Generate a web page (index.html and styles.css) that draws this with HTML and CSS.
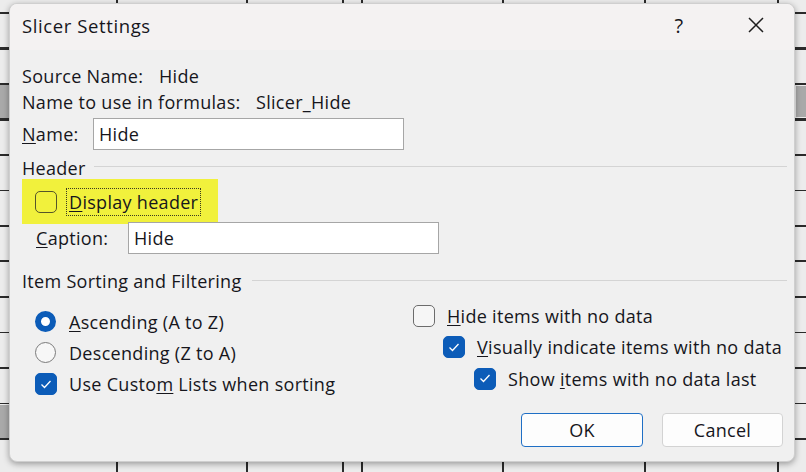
FILE: index.html
```html
<!DOCTYPE html>
<html>
<head>
<meta charset="utf-8">
<link rel="stylesheet" href="styles.css">
</head>
<body>
<div class="sheet">
  <div class="dialog">
    <div class="titlebar">
      <div class="title">Slicer Settings</div>
      <div class="tb-help">?</div>
      <div class="tb-close">
        <svg width="16" height="16" viewBox="0 0 16 16"><path d="M1 1 L15 15 M15 1 L1 15" stroke="#1f1f1f" stroke-width="1.5" fill="none"/></svg>
      </div>
    </div>
    <div class="body">
      <div class="row info">
        <span class="lbl w-src">Source Name:</span><span>Hide</span>
      </div>
      <div class="row info">
        <span class="lbl w-form">Name to use in formulas:</span><span>Slicer_Hide</span>
      </div>
      <div class="row field name-row">
        <span class="lbl w-name"><u>N</u>ame:</span>
        <div class="input">Hide</div>
      </div>
      <div class="group head-header">
        <span>Header</span><span class="sep"></span>
      </div>
      <div class="highlight">
        <span class="cb cb-hl"></span>
        <span class="focus"><u>D</u>isplay header</span>
      </div>
      <div class="row field caption-row">
        <span class="lbl w-cap"><u>C</u>aption:</span>
        <div class="input">Hide</div>
      </div>
      <div class="group head-sort">
        <span>Item Sorting and Filtering</span><span class="sep sep2"></span>
      </div>
      <div class="options">
        <div class="col left">
          <div class="opt"><span class="radio on"></span><span><u>A</u>scending (A to Z)</span></div>
          <div class="opt"><span class="radio"></span><span>Descendin<u>g</u> (Z to A)</span></div>
          <div class="opt"><span class="cb on"><svg width="22" height="22" viewBox="0 0 22 22"><path d="M6.5 11.5 L9.5 14.5 L15.5 8" stroke="#fff" stroke-width="1.3" fill="none"/></svg></span><span>Use Custo<u>m</u> Lists when sorting</span></div>
        </div>
        <div class="col right">
          <div class="opt"><span class="cb"></span><span><u>H</u>ide items with no data</span></div>
          <div class="opt ind1"><span class="cb on"><svg width="22" height="22" viewBox="0 0 22 22"><path d="M6.5 11.5 L9.5 14.5 L15.5 8" stroke="#fff" stroke-width="1.3" fill="none"/></svg></span><span><u>V</u>isually indicate items with no data</span></div>
          <div class="opt ind2"><span class="cb on"><svg width="22" height="22" viewBox="0 0 22 22"><path d="M6.5 11.5 L9.5 14.5 L15.5 8" stroke="#fff" stroke-width="1.3" fill="none"/></svg></span><span>Show <u>i</u>tems with no data last</span></div>
        </div>
      </div>
      <div class="buttons">
        <div class="btn ok">OK</div>
        <div class="btn cancel">Cancel</div>
      </div>
    </div>
  </div>
</div>
</body>
</html>
```
FILE: styles.css
```css
html, body {
  margin: 0;
  padding: 0;
}
body {
  width: 806px;
  height: 472px;
  overflow: hidden;
  font-family: "Open Sans", "Noto Sans", sans-serif;
  font-size: 18px;
  letter-spacing: 0.3px;
  color: #16161c;
}
.sheet {
  width: 806px;
  height: 472px;
  box-sizing: border-box;
  padding: 3px 0 0 9px;
  background-color: #ececec;
  background-image:
    linear-gradient(#a9a9a9, #a9a9a9),
    linear-gradient(#a9a9a9, #a9a9a9),
    linear-gradient(#a9a9a9, #a9a9a9),
    repeating-linear-gradient(180deg, transparent 0, transparent 12px, #2b2b2b 12px, #2b2b2b 14px, transparent 14px, transparent 35.5px),
    linear-gradient(90deg,
      transparent 116px, #2b2b2b 116px, #2b2b2b 118px, transparent 118px,
      transparent 246px, #2b2b2b 246px, #2b2b2b 248px, transparent 248px,
      transparent 342px, #2b2b2b 342px, #2b2b2b 344px, transparent 344px,
      transparent 361px, #2b2b2b 361px, #2b2b2b 363px, transparent 363px,
      transparent 502px, #2b2b2b 502px, #2b2b2b 504px, transparent 504px,
      transparent 644px, #2b2b2b 644px, #2b2b2b 646px, transparent 646px,
      transparent 777px, #2b2b2b 777px, #2b2b2b 779px, transparent 779px);
  background-repeat: no-repeat, no-repeat, no-repeat, repeat, no-repeat;
  background-position: 0 85px, 0 405px, 796px 86px, 0 0, 0 0;
  background-size: 9px 33px, 9px 33px, 10px 31px, 806px 472px, 806px 472px;
}
.dialog {
  width: 786px;
  height: 459px;
  box-sizing: border-box;
  background: #f0f0f0;
  border: 1px solid #cfcfcf;
  border-radius: 8px;
  box-shadow: 0 2px 6px rgba(0,0,0,0.35);
  overflow: hidden;
  display: flex;
  flex-direction: column;
}
.titlebar {
  height: 46px;
  flex: none;
  display: flex;
  align-items: center;
  padding-left: 12px;
  background: #f4f2f2;
}
.title {
  flex: 1;
  font-size: 18.5px;
  letter-spacing: 0.6px;
  padding-bottom: 3px;
}
.tb-help {
  width: 20px;
  text-align: center;
  font-size: 20px;
  margin-right: 59px;
  padding-bottom: 4px;
}
.tb-close {
  width: 16px;
  height: 16px;
  margin-right: 30px;
  margin-bottom: 4px;
}
.tb-close svg { display: block; }
.body {
  flex: 1;
  display: flex;
  flex-direction: column;
  padding: 0 7px 0 12px;
}
.row {
  display: flex;
  align-items: center;
}
.info {
  height: 26px;
}
.info:first-child { margin-top: 13px; }
.lbl { flex: none; }
.w-src { width: 137px; }
.w-form { width: 234px; }
.w-name { width: 71px; }
.w-cap { width: 92px; }
.field { height: 32px; }
.name-row { margin-top: 3px; }
.input {
  width: 311px;
  height: 32px;
  box-sizing: border-box;
  background: #fff;
  border: 1px solid #a6a6a6;
  display: flex;
  align-items: center;
  padding-left: 5px;
}
.group {
  display: flex;
  align-items: center;
  height: 23px;
}
.head-header { margin-top: 6px; }
.sep {
  flex: 1;
  height: 1px;
  background: #d4d4d4;
  margin-left: 8px;
  margin-top: -2px;
}
.highlight {
  width: 196px;
  height: 45px;
  background: #f1f13c;
  display: flex;
  align-items: center;
  box-sizing: border-box;
  padding-left: 13px;
}
.cb {
  flex: none;
  width: 22px;
  height: 22px;
  box-sizing: border-box;
  border: 1.5px solid #6c6c6c;
  border-radius: 5px;
  background: #f6f6f6;
  margin-right: 12px;
}
.cb svg { display: block; margin: -1.5px; }
.cb.on {
  background: #0c5cb8;
  border-color: #0c5cb8;
}
.cb-hl {
  background: transparent;
  border-color: #55552a;
  margin-right: 11px;
}
.focus {
  outline: 1px dotted #3a3a20;
  outline-offset: 1px;
  line-height: 24px;
  padding: 0 1px;
}
.caption-row {
  margin-top: -2px;
  padding-left: 14px;
}
.head-sort {
  margin-top: 15px;
  height: 24px;
}
.sep2 { margin-left: 10px; }
.options {
  height: 100px;
  margin-top: 7px;
  display: flex;
}
.col {
  display: flex;
  flex-direction: column;
}
.left {
  width: 378px;
  padding-left: 13px;
  padding-top: 6px;
}
.opt {
  height: 31.5px;
  display: flex;
  align-items: center;
}
.radio {
  flex: none;
  width: 21px;
  height: 21px;
  box-sizing: border-box;
  border-radius: 50%;
  border: 1.5px solid #7b7b7b;
  background: #f7f7f7;
  margin-right: 13px;
}
.radio.on {
  border: 6.5px solid #0c5cb8;
  background: #fff;
}
.ind1 { padding-left: 30px; }
.ind2 { padding-left: 61px; }
.buttons {
  margin-top: 13px;
  display: flex;
  justify-content: flex-end;
  gap: 19px;
  padding-right: 4px;
}
.btn {
  width: 121px;
  height: 34px;
  box-sizing: border-box;
  border-radius: 4px;
  background: #fdfdfd;
  display: flex;
  align-items: center;
  justify-content: center;
  font-size: 18px;
}
.ok {
  border: 1.5px solid #1f6fc5;
  width: 122px;
}
.cancel {
  border: 1px solid #d3d3d3;
}
u {
  text-underline-offset: 2px;
}
```
